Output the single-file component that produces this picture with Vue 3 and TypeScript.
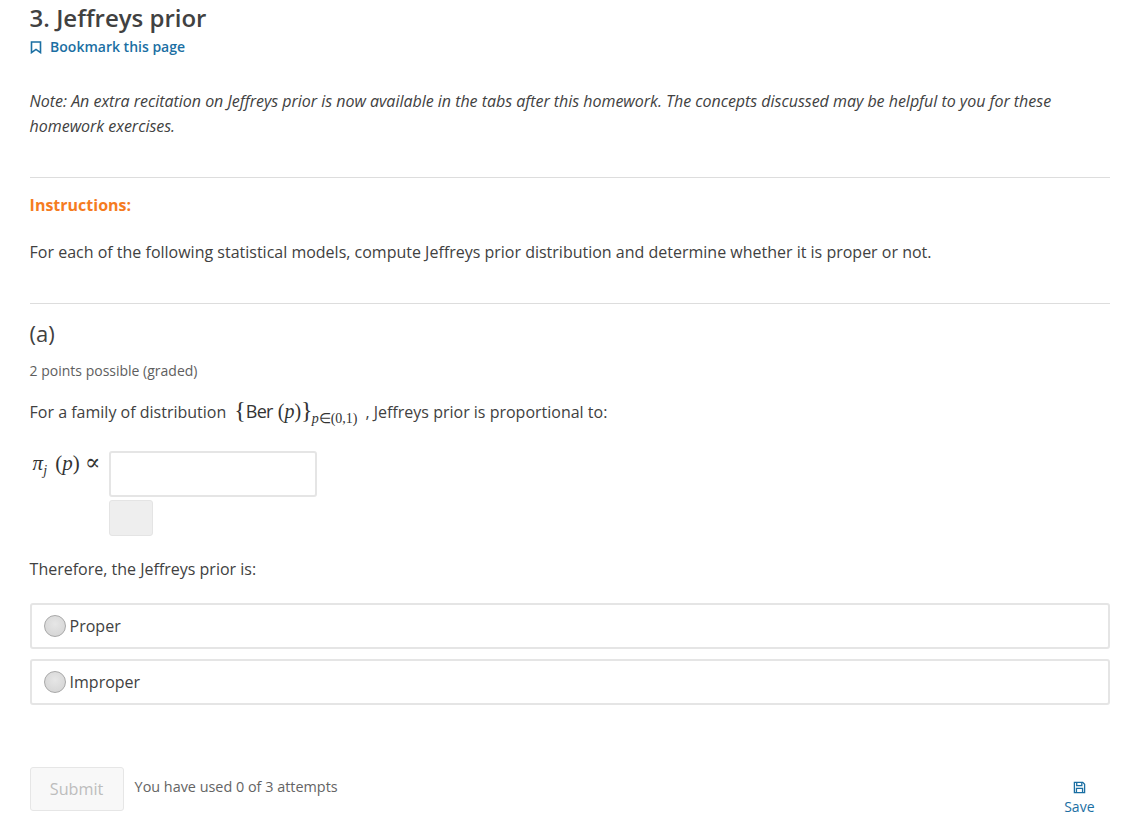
<script setup lang="ts">
const choices: string[] = ["Proper", "Improper"]
</script>

<template>
  <div class="page">
    <h1 class="title">3. Jeffreys prior</h1>
    <a class="bookmark">
      <svg width="12" height="13" viewBox="0 0 12 13" fill="none" stroke="#1b6fa3" stroke-width="1.6">
        <path d="M1.5 1h9v10.6L6 8.4l-4.500 3.200z" />
      </svg>
      Bookmark this page
    </a>

    <p class="note">Note: An extra recitation on Jeffreys prior is now available in the tabs after this homework. The concepts discussed may be helpful to you for these homework exercises.</p>
    <hr class="rule-one" />

    <p class="instructions">Instructions:</p>
    <p class="intro">For each of the following statistical models, compute Jeffreys prior distribution and determine whether it is proper or not.</p>
    <hr class="rule-two" />

    <h2 class="part">(a)</h2>
    <p class="points">2 points possible (graded)</p>

    <p class="question">
      <span>For a family of distribution</span>
      <span class="math set"><span class="brace">{</span><span class="ber">Ber</span> <span class="paren">(</span><i>p</i><span class="paren">)</span><span class="brace">}</span><sub><i>p</i>∈(0,1)</sub></span>
      <span class="after">, Jeffreys prior is proportional to:</span>
    </p>

    <div class="answer">
      <span class="math pi"><i>π</i><sub><i>j</i></sub> <span class="paren">(</span><i>p</i><span class="paren">)</span> <span class="prop">∝</span></span>
      <div class="answer-fields">
        <input class="answer-input" type="text" />
        <div class="preview"></div>
      </div>
    </div>

    <p class="therefore">Therefore, the Jeffreys prior is:</p>

    <label v-for="c in choices" :key="c" class="choice">
      <span class="radio"></span>
      <span>{{ c }}</span>
    </label>

    <div class="actions">
      <button class="submit" disabled>Submit</button>
      <span class="attempts">You have used 0 of 3 attempts</span>
      <a class="save">
        <svg width="13" height="13" viewBox="0 0 14 14" fill="none" stroke="#1b6fa3" stroke-width="1.400">
          <path d="M1.500 1.500h9l2 2v9h-11z" />
          <path d="M4 1.500v3.500h5.500v-3.500M3.700 12.500v-4.500h6.600v4.500" />
        </svg>
        <span>Save</span>
      </a>
    </div>
  </div>
</template>

<style>
html, body {
  background: #fff;
}
</style>

<style scoped>
.page {
  box-sizing: border-box;
  width: 1135px;
  height: 827px;
  overflow: hidden;
  padding: 0 25px 0 29.6px;
  font-family: "Open Sans", sans-serif;
  font-size: 16px;
  color: #414141;
}
.title {
  margin: 2px 0 0;
  font-size: 24px;
  line-height: 32px;
  font-weight: 600;
  color: #414141;
}
.bookmark {
  display: flex;
  align-items: center;
  gap: 8.5px;
  margin-top: 3px;
  font-size: 14px;
  line-height: 20px;
  font-weight: 600;
  color: #1b6fa3;
}
.note {
  margin: 32px 0 0;
  font-style: italic;
  line-height: 25px;
  letter-spacing: -0.02px;
}
hr {
  margin: 0;
  border: 0;
  border-top: 1px solid #ddd;
}
.rule-one {
  margin-top: 38px;
}
.instructions {
  margin: 16px 0 0;
  font-weight: 700;
  line-height: 22px;
  color: #f57c1f;
}
.intro {
  margin: 24px 0 0;
  line-height: 25px;
}
.rule-two {
  margin-top: 38px;
}
.part {
  margin: 15px 0 0;
  font-size: 22px;
  line-height: 28px;
  font-weight: 400;
}
.points {
  margin: 13px 0 0;
  font-size: 14px;
  line-height: 22px;
  color: #5e5e5e;
}
.question {
  display: flex;
  align-items: baseline;
  margin: 17px 0 0;
  line-height: 25px;
  white-space: pre;
}
.math {
  font-family: "Liberation Serif", serif;
  color: #333;
}
.set {
  margin-left: 8px;
  font-size: 20px;
}
.brace {
  font-size: 24px;
  line-height: 0;
}
.ber {
  font-family: "Open Sans", sans-serif;
  font-size: 18px;
  font-weight: 500;
  letter-spacing: -0.7px;
}
.set sub {
  margin-left: -1px;
  font-size: 14px;
  line-height: 0;
  vertical-align: -5px;
}
.after {
  margin-left: 8px;
}
.answer {
  display: flex;
  align-items: flex-start;
  margin-top: 26px;
}
.pi {
  width: 79.4px;
  margin-top: -1px;
  padding-left: 3px;
  box-sizing: border-box;
  font-size: 21px;
  line-height: 26px;
  white-space: pre;
}
.pi sub {
  margin-right: 3px;
  font-size: 14px;
  line-height: 0;
}
.prop {
  font-family: "DejaVu Serif", serif;
  font-size: 23px;
  line-height: 0;
}
.answer-fields {
  display: flex;
  flex-direction: column;
  gap: 3px;
}
.answer-input {
  box-sizing: border-box;
  display: block;
  width: 208px;
  height: 46px;
  background: #fff;
  border: 2px solid #e5e5e5;
  border-radius: 3px;
  outline: 0;
}
.preview {
  width: 44px;
  height: 36px;
  box-sizing: border-box;
  background: #eee;
  border: 1px solid #e4e4e4;
  border-radius: 3px;
}
.therefore {
  margin: 21px 0 0;
  line-height: 25px;
}
.choice {
  display: flex;
  align-items: center;
  box-sizing: border-box;
  height: 46px;
  margin-top: 10px;
  padding-left: 12.400px;
  border: 2px solid #e5e5e5;
  border-radius: 3px;
  line-height: 25px;
}
.therefore + .choice {
  margin-top: 21px;
}
.radio {
  box-sizing: border-box;
  width: 22px;
  height: 22px;
  margin-right: 3.600px;
  border: 1px solid #a8a8a8;
  border-radius: 50%;
  background: radial-gradient(circle at 50% 40%, #e6e6e6, #d2d2d2);
}
.actions {
  display: flex;
  align-items: flex-start;
  margin-top: 62px;
}
.submit {
  box-sizing: border-box;
  width: 94px;
  height: 44px;
  background: #f8f8f8;
  border: 1px solid #e6e6e6;
  border-radius: 3px;
  font-family: inherit;
  font-size: 16.200px;
  color: #bdbdbd;
}
.attempts {
  margin: 9px 0 0 11px;
  font-size: 14.4px;
  line-height: 22px;
  color: #646464;
}
.save {
  display: flex;
  flex-direction: column;
  align-items: center;
  gap: 3px;
  margin: 14px 15.500px 0 auto;
  font-size: 14px;
  line-height: 20px;
  color: #1b6fa3;
}
</style>
